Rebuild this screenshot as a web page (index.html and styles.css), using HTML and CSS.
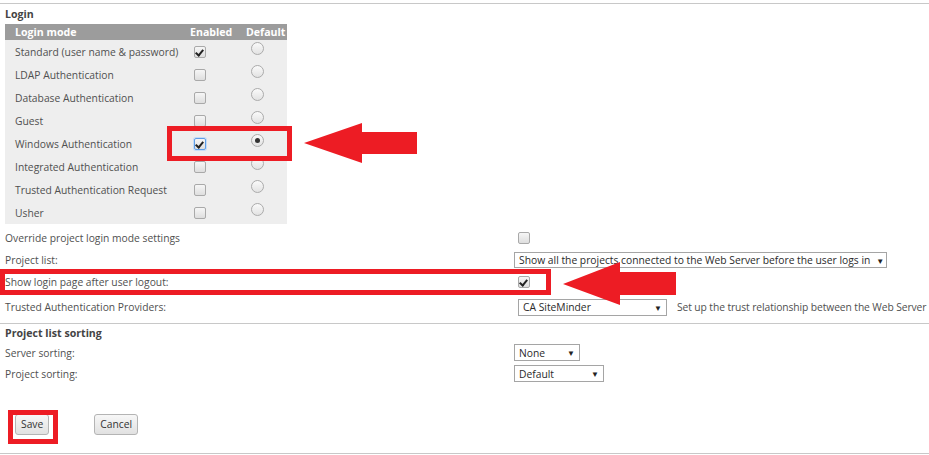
FILE: index.html
```html
<!DOCTYPE html>
<html>
<head>
  <title>Login settings</title>
  <meta charset="utf-8">
  <link rel="stylesheet" href="styles.css">
</head>
<body>
  <div class="page">
    <div class="rule top"></div>

    <div class="secTitle first">Login</div>
    <div class="modes">
      <div class="mh mhLabel">Login mode</div>
      <div class="mh mhEn">Enabled</div>
      <div class="mh mhDef">Default</div>

      <div class="ml">Standard (user name &amp; password)</div>
      <div class="mc"><span class="chk on"></span></div>
      <div class="mr"><span class="rad"></span></div>

      <div class="ml">LDAP Authentication</div>
      <div class="mc"><span class="chk"></span></div>
      <div class="mr"><span class="rad"></span></div>

      <div class="ml">Database Authentication</div>
      <div class="mc"><span class="chk"></span></div>
      <div class="mr"><span class="rad"></span></div>

      <div class="ml">Guest</div>
      <div class="mc"><span class="chk"></span></div>
      <div class="mr"><span class="rad"></span></div>

      <div class="ml">Windows Authentication</div>
      <div class="mc"><span class="chk on focus"></span></div>
      <div class="mr"><span class="rad on"></span></div>

      <div class="ml">Integrated Authentication</div>
      <div class="mc"><span class="chk"></span></div>
      <div class="mr"><span class="rad"></span></div>

      <div class="ml">Trusted Authentication Request</div>
      <div class="mc"><span class="chk"></span></div>
      <div class="mr"><span class="rad"></span></div>

      <div class="ml">Usher</div>
      <div class="mc"><span class="chk"></span></div>
      <div class="mr"><span class="rad"></span></div>
    </div>

    <div class="form login">
      <div class="fl">Override project login mode settings</div>
      <div class="fc"><span class="chk ind"></span></div>

      <div class="fl">Project list:</div>
      <div class="fc"><span class="sel wide">Show all the projects connected to the Web Server before the user logs in<i>&#9660;</i></span></div>

      <div class="fl">Show login page after user logout:</div>
      <div class="fc"><span class="chk on ind"></span></div>

      <div class="fl">Trusted Authentication Providers:</div>
      <div class="fc"><span class="sel ca">CA SiteMinder<i>&#9660;</i></span><span class="hint">Set up the trust relationship between the Web Server</span></div>
    </div>

    <div class="rule"></div>

    <div class="secTitle">Project list sorting</div>
    <div class="form sorting">
      <div class="fl">Server sorting:</div>
      <div class="fc"><span class="sel none">None<i>&#9660;</i></span></div>

      <div class="fl">Project sorting:</div>
      <div class="fc"><span class="sel def">Default<i>&#9660;</i></span></div>
    </div>

    <div class="buttons">
      <span class="btn">Save</span>
      <span class="btn">Cancel</span>
    </div>

    <div class="rule"></div>

    <!-- annotations drawn on top of the screenshot -->
    <svg class="marks" width="929" height="455" viewBox="0 0 929 455">
      <g fill="none" stroke="#ed1c24" stroke-width="5">
        <rect x="169.5" y="125.5" width="120" height="30"/>
        <rect x="2.5" y="268.5" width="546" height="21"/>
        <rect x="10.5" y="409.5" width="45" height="29"/>
      </g>
      <g fill="#ed1c24">
        <polygon points="304,140 362,120 362,129 417,129 417,151 362,151 362,160"/>
        <polygon points="563,281 620,259 620,269 676,269 676,292 620,292 620,302"/>
      </g>
    </svg>
  </div>
</body>
</html>
```

FILE: styles.css
```css
html, body {
  margin: 0;
  padding: 0;
  background: #fff;
}

body {
  width: 929px;
  height: 455px;
  overflow: hidden;
  font-family: "Open Sans", "Noto Sans", sans-serif;
  font-size: 10.3px;
  color: #505050;
}

.page {
  position: relative;
  width: 929px;
  height: 455px;
}

.rule {
  height: 0;
  border-top: 1px solid #c8c8c8;
}
.rule.top {
  margin-top: 3px;
}

.secTitle {
  font-weight: bold;
  font-size: 10.6px;
  color: #444;
  line-height: 18px;
  padding-left: 5px;
}
.secTitle.first {
  margin-top: 1px;
  margin-bottom: 1px;
}

/* login mode table */
.modes {
  display: grid;
  grid-template-columns: 181px 54px 47px;
  grid-template-rows: 16px;
  grid-auto-rows: 23px;
  width: 282px;
  margin-left: 5px;
  background: #eeeeee;
}
.mh {
  background: #9c9c9c;
  color: #fff;
  font-weight: bold;
  font-size: 10.6px;
  line-height: 16px;
  white-space: nowrap;
}
.mhLabel { padding-left: 10px; }
.mhEn { padding-left: 4px; }
.mhDef { padding-left: 6px; }

.ml, .mc, .mr {
  display: flex;
  align-items: center;
}
.ml {
  padding-left: 10px;
  white-space: nowrap;
}
.mc {
  padding-left: 8px;
  padding-top: 1px;
}
.mr {
  padding-left: 11px;
  padding-bottom: 6px;
}

/* fake IE-style inputs */
.chk {
  display: inline-block;
  position: relative;
  width: 10px;
  height: 10px;
  border: 1px solid #a9a9a9;
  border-radius: 2px;
  background: linear-gradient(#f6f6f6, #dedede);
}
.chk.on::after {
  content: "";
  position: absolute;
  left: 2px;
  top: 1px;
  width: 3px;
  height: 6px;
  border-right: 2px solid #222;
  border-bottom: 2px solid #222;
  transform: rotate(40deg);
}
.chk.focus {
  border-color: #5e9ee8;
  box-shadow: 0 0 0 1px #c5dcf7;
}
.rad {
  display: inline-block;
  position: relative;
  width: 11px;
  height: 11px;
  border: 1px solid #ababab;
  border-radius: 50%;
  background: linear-gradient(#fafafa, #e2e2e2);
}
.rad.on::after {
  content: "";
  position: absolute;
  left: 3px;
  top: 3px;
  width: 5px;
  height: 5px;
  border-radius: 50%;
  background: #333;
}

/* label / control form */
.form {
  display: grid;
  grid-template-columns: 509px auto;
  margin-left: 5px;
}
.form.login {
  margin-top: 3px;
  grid-template-rows: 22px 22px 22px 28px;
  margin-bottom: 2px;
}
.form.sorting {
  grid-auto-rows: 21px;
}
.fl, .fc {
  display: flex;
  align-items: center;
  white-space: nowrap;
}
.ind {
  margin-left: 4px;
}

.sel {
  display: inline-flex;
  align-items: center;
  box-sizing: border-box;
  height: 16px;
  padding: 0 4px;
  border: 1px solid #a5a5a5;
  background: #fff;
  color: #2a2a2a;
  white-space: nowrap;
  overflow: hidden;
}
.sel i {
  font-style: normal;
  font-size: 8px;
  margin-left: auto;
  padding-left: 6px;
  color: #222;
}
.sel.wide { width: 373px; }
.sel.ca { width: 149px; height: 17px; margin-left: 4px; }
.sel.none { width: 66px; height: 17px; }
.sel.def { width: 90px; height: 17px; }

.hint {
  margin-left: 10px;
  letter-spacing: -0.1px;
}

.buttons {
  display: flex;
  gap: 45px;
  padding-left: 15px;
  margin-top: 30px;
  margin-bottom: 18px;
}
.btn {
  display: inline-block;
  box-sizing: border-box;
  height: 21px;
  line-height: 19px;
  padding: 0 5px;
  border: 1px solid #b4b4b4;
  border-radius: 3px;
  background: linear-gradient(#f7f7f7, #e1e1e1);
  color: #333;
}

.marks {
  position: absolute;
  left: 0;
  top: 0;
  pointer-events: none;
}
```
